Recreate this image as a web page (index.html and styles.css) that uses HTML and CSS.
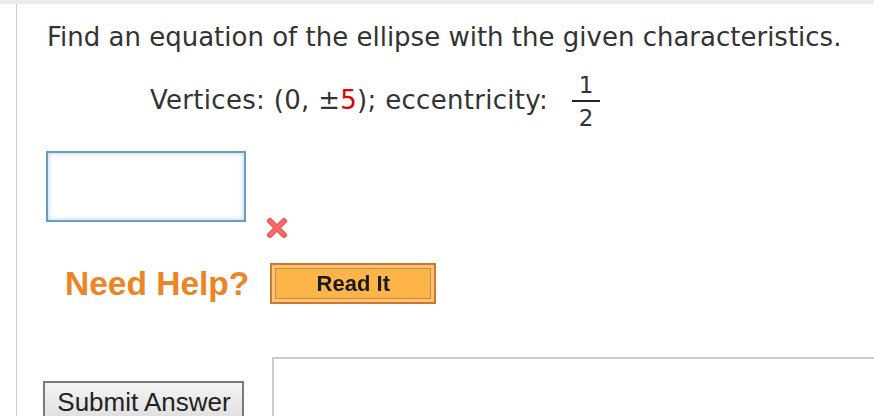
FILE: index.html
```html
<!DOCTYPE html>
<html lang="en">
<head>
    <meta charset="UTF-8">
    <meta name="viewport" content="width=device-width, initial-scale=1.0">
    <title>Ellipse question</title>
    <link rel="stylesheet" href="styles.css">
</head>
<body>
    <div class="topbar"></div>

    <!-- question body -->
    <div class="question">
        <p class="prompt">Find an equation of the ellipse with the given characteristics.</p>
        <p class="given">Vertices: (0, ±<span class="red">5</span>); eccentricity: <span class="frac"><span class="num">1</span><span class="den">2</span></span></p>

        <div class="answer-row">
            <input type="text" class="answer">
            <svg class="mark" width="26" height="24" viewBox="0 0 26 24">
                <path d="M6 5 L20 19 M20 5 L6 19" stroke="#f24a4a" stroke-width="6" stroke-linecap="round" fill="none" opacity="0.9"/>
                <path d="M6 5 L20 19 M20 5 L6 19" stroke="#ff7070" stroke-width="2" stroke-linecap="round" fill="none"/>
            </svg>
        </div>

        <div class="help">
            <span class="need">Need Help?</span>
            <button class="read-it">Read It</button>
        </div>

        <div class="submit-row">
            <button class="submit-btn">Submit Answer</button>
            <div class="panel"></div>
        </div>
    </div>
</body>
</html>
```

FILE: styles.css
```css
html, body {
    margin: 0;
    padding: 0;
    height: 100%;
    overflow: hidden;
    background-color: white;
}
.topbar {
    height: 4px;
    background-color: #ececec;
}
.question {
    margin-left: 16px;
    border-left: 1px solid #cfcfcf;
    padding-left: 29px;
    height: 412px;
    box-sizing: border-box;
    overflow: hidden;
}
.prompt {
    margin: 0;
    padding: 18px 0 0 1px;
    font-family: "DejaVu Sans", Verdana, sans-serif;
    font-size: 26px;
    line-height: 30px;
    color: #333;
    white-space: nowrap;
}
.given {
    margin: 22px 0 0 104px;
    font-family: "DejaVu Sans", Verdana, sans-serif;
    font-size: 26px;
    line-height: 30px;
    letter-spacing: 0.3px;
    color: #333;
    white-space: nowrap;
}
.red {
    color: #e60000;
}
.frac {
    display: inline-block;
    vertical-align: middle;
    margin-left: 15px;
    font-size: 23px;
    line-height: 22px;
    letter-spacing: 0;
    text-align: center;
}
.num, .den {
    display: block;
}
.num {
    padding: 0 7px 4px;
    border-bottom: 2px solid #222;
}
.den {
    padding-top: 5px;
}
.answer-row {
    display: flex;
    align-items: flex-start;
    margin-top: 22px;
}
.answer {
    width: 200px;
    height: 71px;
    box-sizing: border-box;
    border: 2px solid #6b9cc3;
    box-shadow: inset 0 0 4px 1px #c6e0f6;
    outline: none;
    margin: 0;
}
.mark {
    margin: 65px 0 0 18px;
    filter: blur(0.6px);
}
.help {
    display: flex;
    align-items: center;
    margin: 23px 0 0 19px;
}
.need {
    font-family: "Liberation Sans", Arial, sans-serif;
    font-weight: bold;
    font-size: 33.5px;
    color: #eb8526;
}
.read-it {
    width: 166px;
    height: 41px;
    margin-left: 21px;
    border: 2px solid #d2762a;
    background: linear-gradient(#fcd9a0 0, #fcd9a0 3px, #fdb549 4px);
    box-shadow: inset 0 0 0 3px #fcc478, inset 0 0 0 4px #cf8a3e;
    font-family: "Liberation Sans", Arial, sans-serif;
    font-weight: bold;
    font-size: 22px;
    color: #1a1a1a;
    padding: 0;
    filter: blur(0.3px);
}
.submit-row {
    display: flex;
    align-items: flex-start;
    margin-top: 53px;
    margin-left: -3px;
}
.submit-btn {
    width: 201px;
    height: 42px;
    margin-top: 24px;
    border: 2px solid #7a7a7a;
    background: linear-gradient(#f4f4f4, #dedede);
    font-family: "Liberation Sans", Arial, sans-serif;
    font-size: 26px;
    color: #222;
    padding: 0 0 0 1px;
    text-align: center;
    line-height: 34px;
}
.panel {
    flex: 1;
    height: 70px;
    margin-left: 28px;
    border-top: 2px solid #cccccc;
    border-left: 2px solid #cccccc;
}
```
